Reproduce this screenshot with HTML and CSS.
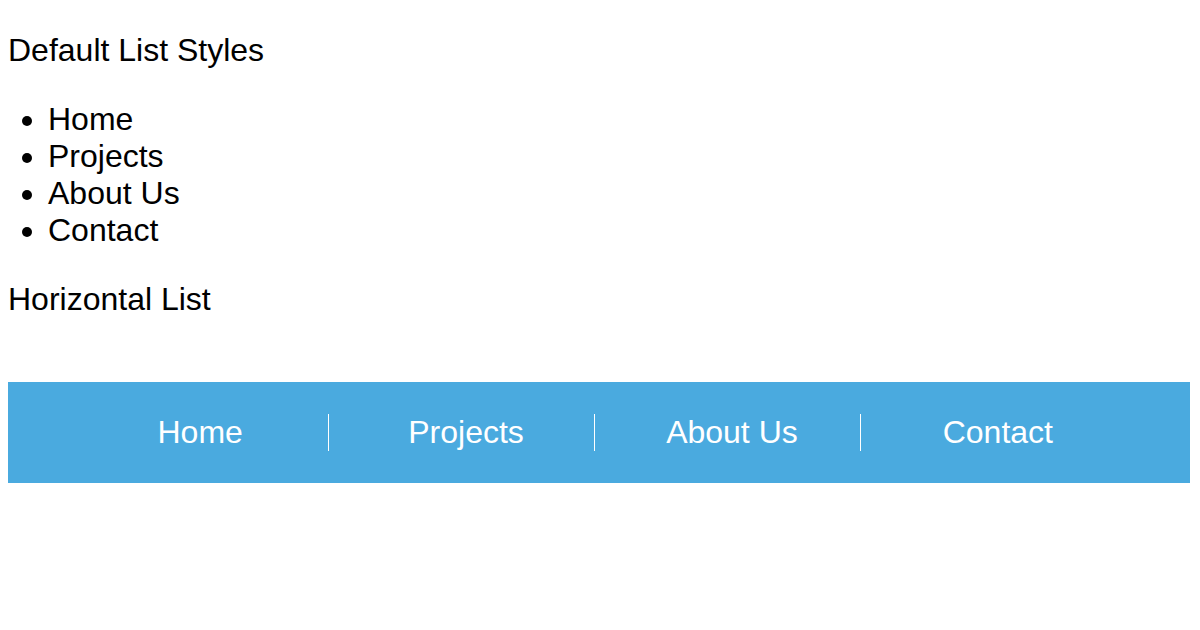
FILE: index.html
```html
<!DOCTYPE html>
<html>
<head>
<meta charset="utf-8">
<link rel="stylesheet" href="styles.css">
</head>
<body>
<p class="title">Default List Styles</p>
<ul class="default-list">
  <li>Home</li>
  <li>Projects</li>
  <li>About Us</li>
  <li>Contact</li>
</ul>
<p class="title">Horizontal List</p>
<ul class="horizontal-list">
  <li>Home</li>
  <li>Projects</li>
  <li>About Us</li>
  <li>Contact</li>
</ul>
</body>
</html>
```
FILE: styles.css
```css
body {
  margin: 0 8px 8px;
  font-family: "Liberation Sans", Arial, sans-serif;
  font-size: 32px;
  color: #000;
  background: #fff;
}
.title {
  margin: 32px 0;
}
.default-list {
  margin: 32px 0;
  padding-left: 40px;
}
.horizontal-list {
  list-style: none;
  margin: 64px 2px 0 0;
  padding: 32px 0;
  background: #4aaadf;
  display: flex;
  justify-content: center;
  gap: 8.9px;
}
.horizontal-list li {
  width: 256px;
  text-align: center;
  color: #fff;
  border-right: 1px solid #fff;
}
.horizontal-list li:last-child {
  border-right: none;
}
```
